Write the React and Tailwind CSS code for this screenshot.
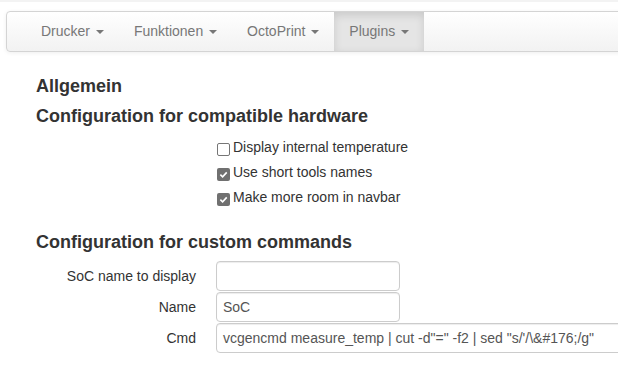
import React from 'react';

const navItems = [
    { label: 'Drucker' },
    { label: 'Funktionen' },
    { label: 'OctoPrint' },
    { label: 'Plugins', active: true },
];

function Caret() {
    return (
        <b className="inline-block w-0 h-0 ml-[2px] mt-[8px] align-top border-t-[4px] border-x-[4px] border-t-[#777] border-x-transparent"></b>
    );
}

function Checkbox({ checked, label }) {
    return (
        <label className="flex items-start h-[25px] leading-[20px] text-[14px] text-[#333]">
            {checked ? (
                <span className="mt-[6px] ml-[1px] w-[13px] h-[13px] rounded-[2px] bg-[#707070] flex items-center justify-center shrink-0">
                    <svg width="9" height="9" viewBox="0 0 10 10">
                        <path d="M1.5 5.2 L4 7.6 L8.6 2.6" fill="none" stroke="#fff" strokeWidth="1.8" />
                    </svg>
                </span>
            ) : (
                <span className="mt-[6px] ml-[1px] w-[13px] h-[13px] rounded-[2px] border border-[#767676] bg-white shrink-0"></span>
            )}
            <span className="ml-[3px]">{label}</span>
        </label>
    );
}

function Field({ label, value, wide }) {
    return (
        <div className="flex items-center h-[30px]">
            <div className="w-[160px] shrink-0 text-right text-[14px] leading-[20px] text-[#333]">{label}</div>
            <div
                className={`ml-[20px] shrink-0 h-[30px] px-[6px] py-[4px] border border-[#ccc] rounded-[4px] bg-white text-[14px] leading-[20px] text-[#555] whitespace-nowrap overflow-hidden shadow-[inset_0_1px_1px_rgba(0,0,0,0.075)] ${wide ? 'w-[430px]' : 'w-[184px]'}`}
            >
                {value}
            </div>
        </div>
    );
}

export default function App() {
    return (
        <div className="w-[618px] h-[391px] overflow-hidden bg-white font-['Liberation_Sans',Arial,sans-serif]">
            <div className="h-[2px] bg-[#f3f3f3]"></div>

            {/* Navbar */}
            <div className="mt-[9px] ml-[6px] w-[640px] h-[41px] flex pl-[19px] border border-[#d4d4d4] rounded-[4px] bg-gradient-to-b from-white to-[#f2f2f2] shadow-[0_1px_4px_rgba(0,0,0,0.065)]">
                {navItems.map((item) => (
                    <div
                        key={item.label}
                        className={`px-[15px] py-[10px] text-[14px] leading-[19px] text-[#777] whitespace-nowrap ${item.active ? 'bg-[#e5e5e5] shadow-[inset_0_3px_8px_rgba(0,0,0,0.125)] text-[#555]' : ''}`}
                    >
                        {item.label} <Caret />
                    </div>
                ))}
            </div>

            {/* Content */}
            <div className="pl-[36px]">
                <h3 className="mt-[24px] text-[18px] leading-[20px] font-bold text-[#333]">Allgemein</h3>
                <h3 className="mt-[10px] text-[18px] leading-[20px] font-bold text-[#333]">Configuration for compatible hardware</h3>

                <div className="mt-[11px] ml-[180px] flex flex-col">
                    <Checkbox label="Display internal temperature" />
                    <Checkbox checked label="Use short tools names" />
                    <Checkbox checked label="Make more room in navbar" />
                </div>

                <h3 className="mt-[20px] text-[18px] leading-[20px] font-bold text-[#333]">Configuration for custom commands</h3>

                <div className="mt-[9px] flex flex-col gap-[1px]">
                    <Field label="SoC name to display" value="" />
                    <Field label="Name" value="SoC" />
                    <Field label="Cmd" value={'vcgencmd measure_temp | cut -d"=" -f2 | sed "s/\'/\\&#176;/g"'} wide />
                </div>
            </div>
        </div>
    );
}
